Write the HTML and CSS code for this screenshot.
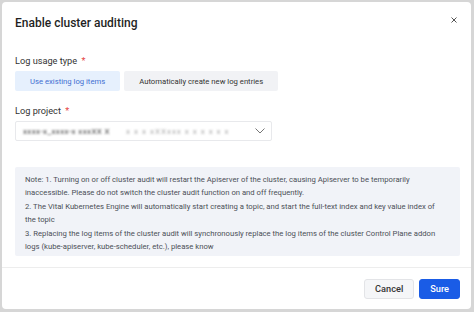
FILE: index.html
```html
<!DOCTYPE html>
<html lang="en">

<head>
    <meta charset="UTF-8">
    <meta name="viewport" content="width=device-width, initial-scale=1.0">
    <title>Enable cluster auditing</title>
    <link rel="stylesheet" href="styles.css">
</head>

<body>
    <div class="dialog">
        <div class="dialog-header">
            <h1>Enable cluster auditing</h1>
            <button class="close" type="button" aria-label="Close">
                <svg width="6" height="6" viewBox="0 0 6 6">
                    <path d="M0.5 0.5L5.5 5.5M5.5 0.5L0.5 5.5" stroke="#555" stroke-width="1" />
                </svg>
            </button>
        </div>

        <div class="dialog-body">
            <div class="form-group">
                <label>Log usage type <span class="req">*</span></label>
                <div class="segments">
                    <button class="segment active" type="button">Use existing log items</button>
                    <button class="segment" type="button">Automatically create new log entries</button>
                </div>
            </div>

            <div class="form-group">
                <label>Log project <span class="req">*</span></label>
                <div class="select">
                    <span class="blur">xxxx-x_xxxx-x xxxXX X</span>
                    <span class="blur light">x x x xXXxxx x x x x x x</span>
                    <svg class="chevron" width="10" height="6" viewBox="0 0 10 6">
                        <path d="M0.5 0.5L5 5L9.5 0.5" fill="none" stroke="#666" stroke-width="0.9" />
                    </svg>
                </div>
            </div>

            <div class="note">
                <p>Note: 1. Turning on or off cluster audit will restart the Apiserver of the cluster, causing Apiserver to be temporarily inaccessible. Please do not switch the cluster audit function on and off frequently.</p>
                <p>2. The Vital Kubernetes Engine will automatically start creating a topic, and start the full-text index and key value index of <br>the topic</p>
                <p>3. Replacing the log items of the cluster audit will synchronously replace the log items of the cluster Control Plane addon logs (kube-apiserver, kube-scheduler, etc.), please know</p>
            </div>
        </div>

        <div class="dialog-footer">
            <button class="btn" type="button">Cancel</button>
            <button class="btn primary" type="button">Sure</button>
        </div>
    </div>
</body>

</html>
```

FILE: styles.css
```css
* {
    margin: 0;
    padding: 0;
    box-sizing: border-box;
}

body {
    font-family: Roboto, 'Liberation Sans', sans-serif;
    background-color: #d6d6d6;
    padding: 2px 3px 3px 2px;
    height: 312px;
    color: #333;
}

.dialog {
    background: white;
    border-radius: 4px;
    height: 307px;
    display: flex;
    flex-direction: column;
}

.dialog-header {
    display: flex;
    justify-content: space-between;
    align-items: flex-start;
    padding: 13px 14px 0 13px;
    height: 53px;
}

h1 {
    font-size: 12px;
    line-height: 16px;
    font-weight: 500;
    color: #1f1f1f;
}

.close {
    background: none;
    border: none;
    padding: 2px 0;
    cursor: pointer;
    display: flex;
}

.dialog-body {
    padding: 0 11px 0 13px;
    flex: 1;
}

.form-group {
    margin-bottom: 14px;
}

label {
    display: block;
    font-size: 9.2px;
    line-height: 12px;
    color: #333;
    margin-bottom: 4px;
}

.req {
    color: #e54545;
    margin-left: 2px;
}

.segments {
    display: flex;
    gap: 4px;
}

.segment {
    height: 20px;
    padding: 0 15px;
    border: none;
    border-radius: 2px;
    background-color: #f1f2f5;
    color: #333;
    font-family: inherit;
    font-size: 7.7px;
}

.segment.active {
    background-color: #e6f0fd;
    color: #3f6fd1;
}

.select {
    width: 257px;
    height: 20px;
    border: 1px solid #e8e9ec;
    border-radius: 2px;
    display: flex;
    align-items: center;
    gap: 16px;
    padding: 0 6px 0 7px;
    font-size: 8px;
    white-space: nowrap;
    overflow: hidden;
}

.blur {
    color: #3a3a3a;
    filter: blur(0.8px);
    letter-spacing: 0.4px;
    flex-shrink: 0;
}

.blur.light {
    color: #a8a8a8;
    letter-spacing: 1px;
}

.chevron {
    margin-left: auto;
    flex-shrink: 0;
}

.form-group + .note {
    margin-top: 26px;
}

.note {
    background-color: #f1f3f8;
    border-radius: 2px;
    padding: 6px 10px 3px 10px;
    font-size: 7.7px;
    line-height: 13.4px;
    color: #4b4f57;
}

.dialog-footer {
    border-top: 1px solid #ededed;
    height: 42px;
    display: flex;
    justify-content: flex-end;
    align-items: center;
    gap: 5px;
    padding: 0 11px;
}

.btn {
    height: 20px;
    padding: 0 10px;
    border: 1px solid #e3e4e7;
    border-radius: 3px;
    background-color: #f5f6f8;
    color: #333;
    font-family: inherit;
    font-size: 9.2px;
    font-weight: 500;
    cursor: pointer;
}

.btn.primary {
    background-color: #1a5ce6;
    border-color: #1a5ce6;
    color: white;
}
```
